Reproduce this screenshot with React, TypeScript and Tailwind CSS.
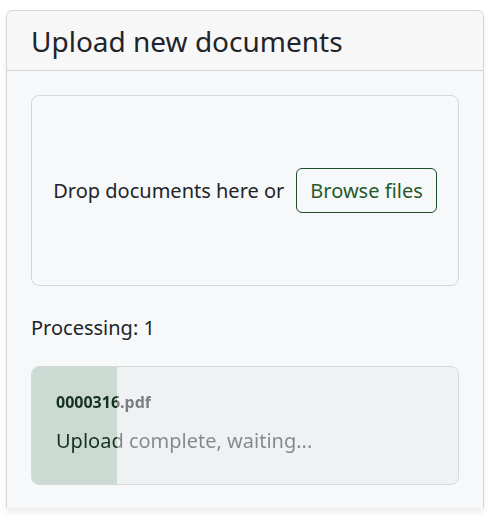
import React from 'react';

function FileRow({ name, status, progress }: { name: string; status: string; progress: number }) {
  // text left of the bar's edge is dark, the rest grey
  const cut = Math.round((426 * progress) / 100) - 24;
  const split = (light: string) => ({
    backgroundImage: `linear-gradient(to right, #15301f ${cut}px, ${light} ${cut}px)`,
  });
  return (
    <div className="relative overflow-hidden rounded-lg border border-[#d6d8da] bg-[#f0f1f2]">
      <div className="absolute inset-y-0 left-0 bg-[#cbdbd3]" style={{ width: `${progress}%` }} />
      <div className="relative px-6 pt-[23px] pb-[28px]">
        <div className="w-fit bg-clip-text text-[16px] font-bold leading-[24px] text-transparent" style={split('#7a7d80')}>
          {name}
        </div>
        <div className="mt-[12px] w-fit bg-clip-text text-[20px] leading-[30px] text-transparent" style={split('#85888b')}>
          {status}
        </div>
      </div>
    </div>
  );
}

export default function App() {
  return (
    <div className="min-h-[521px] bg-white pl-[6px] pt-[10px] font-['Segoe_UI','Noto_Sans',sans-serif] text-[#212529]">
      <div className="h-[498px] w-[478px] overflow-hidden rounded-t-[7px] border-x border-t border-[#d4d6d8] bg-[#f7f8f9] shadow-[0_4px_6px_rgba(0,0,0,0.08)]">
        <div className="flex h-[60px] items-center border-b border-[#d0d2d4] bg-[#f7f7f8] px-6">
          <h3 className="text-[28px] leading-[36px] font-normal">Upload new documents</h3>
        </div>
        <div className="px-6 pt-6">
          <div className="flex h-[191px] items-center justify-center gap-3 rounded-lg border border-[#d4d6d8]">
            <span className="text-[20px]">Drop documents here or</span>
            <button className="h-[45px] rounded-[6px] border border-[#1d4f2b] px-[13px] text-[20px] text-[#1f5a2b]">Browse files</button>
          </div>
          <div className="mt-[27px] text-[20px] leading-[30px]">Processing: 1</div>
          <div className="mt-[23px]">
            <FileRow name="0000316.pdf" status="Upload complete, waiting..." progress={20} />
          </div>
        </div>
      </div>
    </div>
  );
}
